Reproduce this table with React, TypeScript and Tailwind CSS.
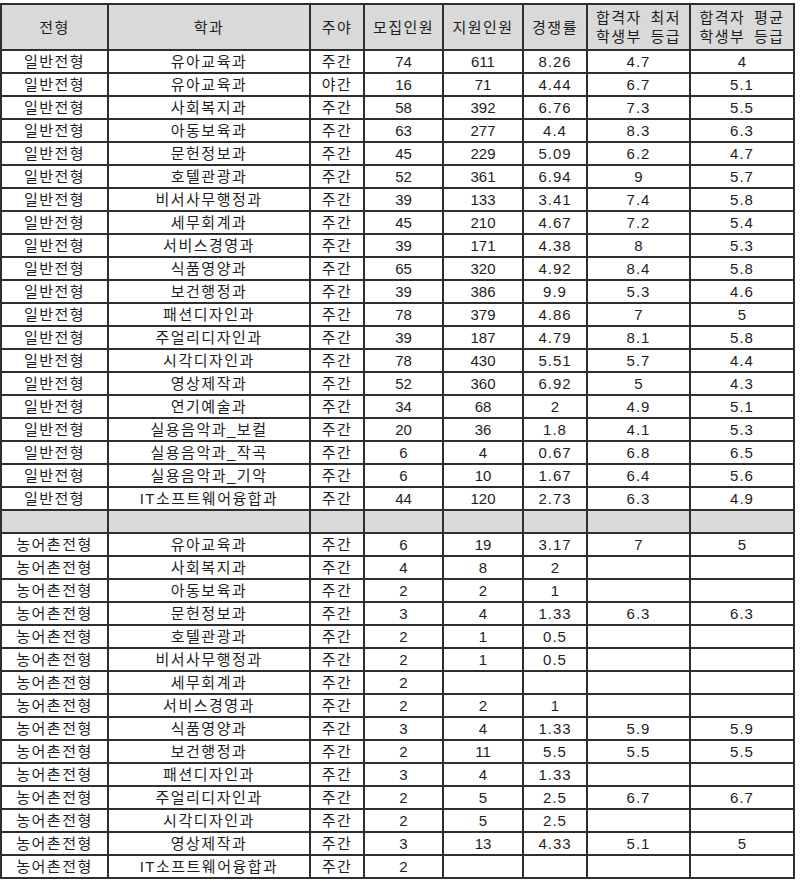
import React from 'react';

type Row = [string, string, string, string, string, string, string, string];

const general: Row[] = [
  ['일반전형', '유아교육과', '주간', '74', '611', '8.26', '4.7', '4'],
  ['일반전형', '유아교육과', '야간', '16', '71', '4.44', '6.7', '5.1'],
  ['일반전형', '사회복지과', '주간', '58', '392', '6.76', '7.3', '5.5'],
  ['일반전형', '아동보육과', '주간', '63', '277', '4.4', '8.3', '6.3'],
  ['일반전형', '문헌정보과', '주간', '45', '229', '5.09', '6.2', '4.7'],
  ['일반전형', '호텔관광과', '주간', '52', '361', '6.94', '9', '5.7'],
  ['일반전형', '비서사무행정과', '주간', '39', '133', '3.41', '7.4', '5.8'],
  ['일반전형', '세무회계과', '주간', '45', '210', '4.67', '7.2', '5.4'],
  ['일반전형', '서비스경영과', '주간', '39', '171', '4.38', '8', '5.3'],
  ['일반전형', '식품영양과', '주간', '65', '320', '4.92', '8.4', '5.8'],
  ['일반전형', '보건행정과', '주간', '39', '386', '9.9', '5.3', '4.6'],
  ['일반전형', '패션디자인과', '주간', '78', '379', '4.86', '7', '5'],
  ['일반전형', '주얼리디자인과', '주간', '39', '187', '4.79', '8.1', '5.8'],
  ['일반전형', '시각디자인과', '주간', '78', '430', '5.51', '5.7', '4.4'],
  ['일반전형', '영상제작과', '주간', '52', '360', '6.92', '5', '4.3'],
  ['일반전형', '연기예술과', '주간', '34', '68', '2', '4.9', '5.1'],
  ['일반전형', '실용음악과_보컬', '주간', '20', '36', '1.8', '4.1', '5.3'],
  ['일반전형', '실용음악과_작곡', '주간', '6', '4', '0.67', '6.8', '6.5'],
  ['일반전형', '실용음악과_기악', '주간', '6', '10', '1.67', '6.4', '5.6'],
  ['일반전형', 'IT소프트웨어융합과', '주간', '44', '120', '2.73', '6.3', '4.9'],
];

const rural: Row[] = [
  ['농어촌전형', '유아교육과', '주간', '6', '19', '3.17', '7', '5'],
  ['농어촌전형', '사회복지과', '주간', '4', '8', '2', '', ''],
  ['농어촌전형', '아동보육과', '주간', '2', '2', '1', '', ''],
  ['농어촌전형', '문헌정보과', '주간', '3', '4', '1.33', '6.3', '6.3'],
  ['농어촌전형', '호텔관광과', '주간', '2', '1', '0.5', '', ''],
  ['농어촌전형', '비서사무행정과', '주간', '2', '1', '0.5', '', ''],
  ['농어촌전형', '세무회계과', '주간', '2', '', '', '', ''],
  ['농어촌전형', '서비스경영과', '주간', '2', '2', '1', '', ''],
  ['농어촌전형', '식품영양과', '주간', '3', '4', '1.33', '5.9', '5.9'],
  ['농어촌전형', '보건행정과', '주간', '2', '11', '5.5', '5.5', '5.5'],
  ['농어촌전형', '패션디자인과', '주간', '3', '4', '1.33', '', ''],
  ['농어촌전형', '주얼리디자인과', '주간', '2', '5', '2.5', '6.7', '6.7'],
  ['농어촌전형', '시각디자인과', '주간', '2', '5', '2.5', '', ''],
  ['농어촌전형', '영상제작과', '주간', '3', '13', '4.33', '5.1', '5'],
  ['농어촌전형', 'IT소프트웨어융합과', '주간', '2', '', '', '', ''],
];

const widths = ['w-[107px]', 'w-[202px]', 'w-[54px]', 'w-[79px]', 'w-[80px]', 'w-[64px]', 'w-[103px]', 'w-[104px]'];

const cell = 'border-2 border-[#2e2e2e] p-0 text-center align-middle';

// korean text is spaced out in the source sheet, decimals a little too
const spacing = (i: number, v: string) => {
  if (i < 3) return 'tracking-[1.5px]';
  if (v.includes('.')) return 'tracking-[1px]';
  return '';
};

const DataRow: React.FC<{ row: Row }> = ({ row }) => (
  <tr className="h-[23px]">
    {row.map((v, i) => (
      <td key={i} className={`${cell} ${spacing(i, v)}`}>
        {v}
      </td>
    ))}
  </tr>
);

export default function App() {
  return (
    <div
      className="min-h-[882px] bg-white pt-[3px] text-[15px] leading-[19px] text-[#1e1e1e]"
      style={{ fontFamily: '"Liberation Sans", "Noto Sans CJK KR", sans-serif' }}
    >
      <table className="w-[795px] table-fixed border-collapse">
        <colgroup>
          {widths.map((w, i) => (
            <col key={i} className={w} />
          ))}
        </colgroup>
        <thead>
          <tr className="h-[46px] bg-[#d9d9d9] tracking-[1.5px]">
            <th className={`${cell} font-normal`}>전형</th>
            <th className={`${cell} font-normal`}>학과</th>
            <th className={`${cell} font-normal`}>주야</th>
            <th className={`${cell} font-normal`}>모집인원</th>
            <th className={`${cell} font-normal`}>지원인원</th>
            <th className={`${cell} font-normal`}>경쟁률</th>
            <th className={`${cell} font-normal [word-spacing:3px]`}>
              합격자 최저
              <br />
              학생부 등급
            </th>
            <th className={`${cell} font-normal [word-spacing:3px]`}>
              합격자 평균
              <br />
              학생부 등급
            </th>
          </tr>
        </thead>
        <tbody>
          {general.map((r, i) => (
            <DataRow key={`g${i}`} row={r} />
          ))}
          <tr className="h-[23px] bg-[#d9d9d9]">
            {widths.map((_, i) => (
              <td key={i} className={cell} />
            ))}
          </tr>
          {rural.map((r, i) => (
            <DataRow key={`r${i}`} row={r} />
          ))}
        </tbody>
      </table>
    </div>
  );
}
